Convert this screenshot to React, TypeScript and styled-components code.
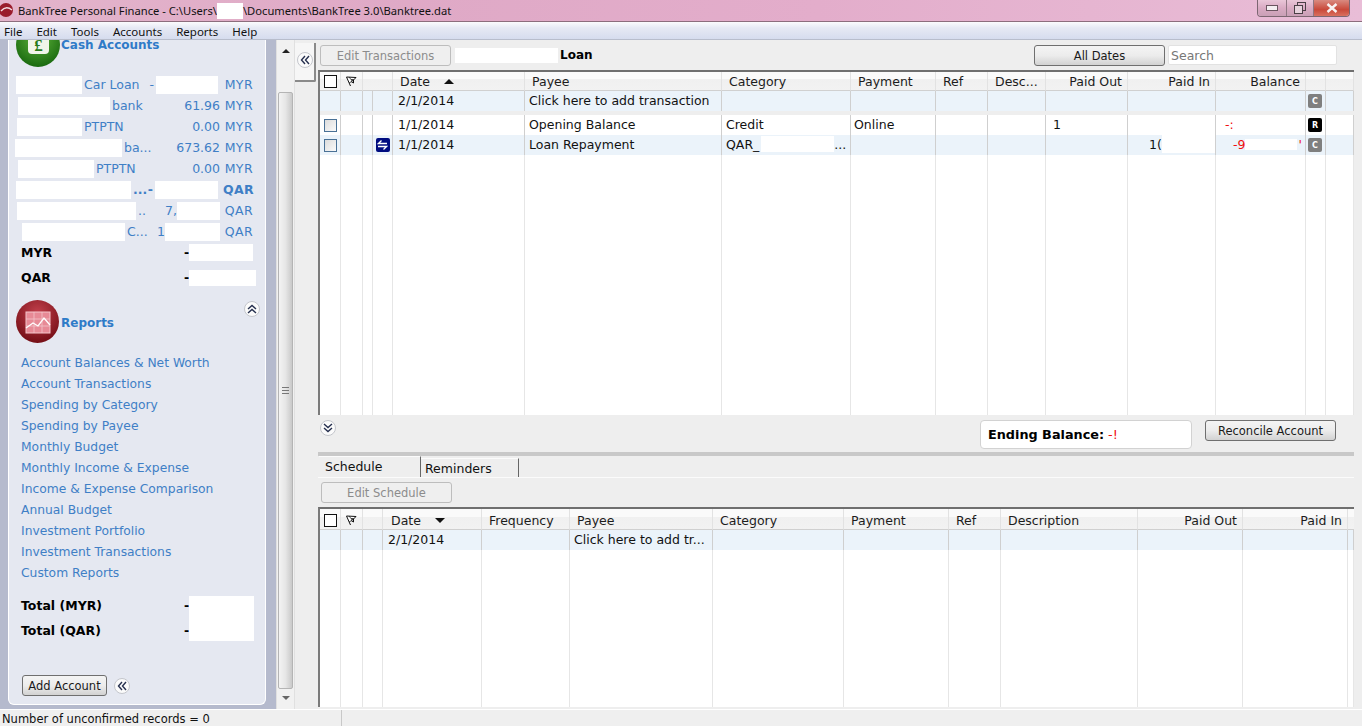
import React, { FC } from 'react';
import styled, { createGlobalStyle } from 'styled-components';

const GlobalStyle = createGlobalStyle`
	html, body {
		margin: 0;
		padding: 0;
		overflow: hidden;
		background: #eeeeee;
	}
	* {
		box-sizing: border-box;
	}
`;

const bodyFont = `'DejaVu Sans', Verdana, sans-serif`;
const chromeFont = `'Noto Sans', 'Open Sans', sans-serif`;

const topColumns = '21px 22px 10px 20px 132px 197px 129px 85px 52px 58px 82px 88px 90px 20px 28px';
const bottomColumns = '21px 22px 20px 99px 88px 143px 131px 105px 52px 137px 105px 105px 6px';

const Window = styled.div`
	width: 1362px;
	height: 726px;
	display: grid;
	grid-template-rows: 22px 18px 669px 17px;
	font-family: ${bodyFont};
	font-size: 12px;
	color: #111;
	overflow: hidden;
`;

const TitleBar = styled.div`
	position: relative;
	display: flex;
	align-items: center;
	padding-left: 18px;
	font-family: ${chromeFont};
	font-size: 11.2px;
	background: linear-gradient(90deg, #e3b4cb 0%, #dfa9c6 30%, #e3adcb 60%, #e9bdd7 100%);
	border-bottom: 1px solid #8c6d7d;
`;

const TitleMask = styled.span`
	display: inline-block;
	width: 26px;
	height: 16px;
	background: #fff;
`;

const AppIcon = styled.svg`
	position: absolute;
	left: 0;
	top: 3px;
`;

const Controls = styled.div`
	position: absolute;
	right: 12px;
	top: 0;
	display: grid;
	grid-template-columns: 28px 27px 36px;
	height: 17px;
	border: 1px solid #7c6672;
	border-top: 0;
	border-radius: 0 0 4px 4px;
	overflow: hidden;
`;

const Control = styled.div<{ $close?: boolean }>`
	display: flex;
	align-items: center;
	justify-content: center;
	border-left: 1px solid #8f7683;
	background: ${(p) =>
		p.$close
			? 'linear-gradient(180deg, #d98a80 0%, #c9493a 60%, #d9705f 100%)'
			: 'linear-gradient(180deg, #e9c6d8 0%, #d9aac3 50%, #c9a0b6 100%)'};
	&:first-child {
		border-left: 0;
	}
`;

const MenuBar = styled.div`
	display: flex;
	align-items: center;
	padding: 2px 0 0 4px;
	gap: 14px;
	font-family: ${chromeFont};
	font-size: 11.5px;
	background: linear-gradient(180deg, #fbfbfd 0%, #e6e9f4 35%, #d6dcee 100%);
	border-bottom: 1px solid #b8bdcc;
`;

const Body = styled.div`
	display: grid;
	grid-template-columns: 276px 19px 23px 1fr;
	min-height: 0;
`;

const SidePanel = styled.div`
	background: #b5bacd;
	padding: 0 10px 4px 8px;
	overflow: hidden;
`;

const SideCard = styled.div`
	height: 100%;
	background: #e5e8f1;
	border: 1px solid #fff;
	border-top: 0;
	border-radius: 0 0 6px 6px;
	padding: 0 12px 0 7px;
	display: flex;
	flex-direction: column;
	position: relative;
`;

const SectionHead = styled.div<{ $clipped?: boolean; $mt?: number }>`
	display: flex;
	align-items: center;
	gap: 2px;
	height: 43px;
	margin-top: ${(p) => (p.$clipped ? '-17px' : `${p.$mt ?? 0}px`)};
	position: relative;
`;

const SectionTitle = styled.div<{ $raised?: boolean }>`
	font-weight: bold;
	font-size: 12px;
	color: #2f7bc8;
	${(p) => (p.$raised ? 'align-self: flex-start; margin: 15px 0 0 -1px;' : 'margin-top: 2px;')}
`;

const AccountList = styled.div`
	display: flex;
	flex-direction: column;
	margin: 8px 0 -2px;
`;

const AccountRow = styled.div<{ $bold?: boolean }>`
	display: flex;
	align-items: center;
	height: 21px;
	color: #3f7fc6;
	font-size: 12.5px;
	white-space: nowrap;
	font-weight: ${(p) => (p.$bold ? 'bold' : 'normal')};
`;

const Mask = styled.span<{ $w: number; $h?: number; $ml?: number; $mr?: number }>`
	display: inline-block;
	flex: none;
	width: ${(p) => p.$w}px;
	height: ${(p) => p.$h ?? 18}px;
	margin-left: ${(p) => p.$ml ?? 0}px;
	margin-right: ${(p) => p.$mr ?? 0}px;
	background: #fff;
`;

const AccountName = styled.span`
	margin-left: 2px;
`;

const Amount = styled.span`
	margin-left: auto;
`;

const Unit = styled.span`
	flex: none;
	width: 30px;
	margin-left: 3px;
	text-align: right;
	letter-spacing: 0.4px;
`;

const TotalRow = styled.div`
	display: flex;
	align-items: center;
	height: 25px;
	padding-left: 5px;
	font-weight: bold;
	font-size: 12.5px;
	color: #000;
`;

const TotalLabel = styled.span`
	width: 163px;
	flex: none;
`;

const TotalDash = styled.span`
	width: 5px;
	flex: none;
`;

const ReportLinks = styled.div`
	display: flex;
	flex-direction: column;
	margin-top: 10px;
	padding-left: 5px;
`;

const ReportLink = styled.div`
	height: 21px;
	line-height: 21px;
	font-size: 12.3px;
	color: #3f7fc6;
	white-space: nowrap;
`;

const TotalsBlock = styled.div`
	position: relative;
	margin-top: 9px;
`;

const TotalsMask = styled.span`
	position: absolute;
	left: 173px;
	top: 3px;
	width: 65px;
	height: 45px;
	background: #fff;
`;

const SideFooter = styled.div`
	display: flex;
	align-items: center;
	gap: 7px;
	margin-top: auto;
	margin-bottom: 8px;
	padding-left: 6px;
`;

const RoundBtn = styled.div`
	width: 16px;
	height: 16px;
	border-radius: 50%;
	background: #fbfbfb;
	border: 1px solid #c4c6cc;
	display: flex;
	align-items: center;
	justify-content: center;
	flex: none;
`;

const ChevronSpot = styled.div`
	position: absolute;
	right: -7px;
	top: 1px;
`;

const Button = styled.div<{ $w: number; $disabled?: boolean }>`
	width: ${(p) => p.$w}px;
	height: 21px;
	flex: none;
	display: flex;
	align-items: center;
	justify-content: center;
	padding-top: 1px;
	font-size: 11.5px;
	border-radius: 3px;
	white-space: nowrap;
	color: ${(p) => (p.$disabled ? '#8c8c8c' : '#1a1a1a')};
	border: 1px solid ${(p) => (p.$disabled ? '#bdbdbd' : '#6f6f6f')};
	background: ${(p) =>
		p.$disabled
			? '#efefef'
			: 'linear-gradient(180deg, #f4f4f4 0%, #ececec 50%, #d2d2d2 100%)'};
`;

const ScrollTrack = styled.div`
	background: #f1f1f1;
	border-left: 1px solid #e0e0e0;
	border-right: 1px solid #e0e0e0;
	display: flex;
	flex-direction: column;
	align-items: center;
	padding: 9px 0 0;
`;

const ScrollArrow = styled.div<{ $down?: boolean }>`
	width: 0;
	height: 0;
	flex: none;
	border-left: 4px solid transparent;
	border-right: 4px solid transparent;
	${(p) => (p.$down ? 'border-top: 4px solid #666;' : 'border-bottom: 4px solid #222;')}
`;

const SortArrow = styled.div<{ $down?: boolean }>`
	width: 0;
	height: 0;
	flex: none;
	border-left: 5px solid transparent;
	border-right: 5px solid transparent;
	${(p) => (p.$down ? 'border-top: 5px solid #111;' : 'border-bottom: 5px solid #111;')}
`;

const ScrollThumb = styled.div`
	width: 15px;
	height: 597px;
	margin: 39px 0 7px;
	background: linear-gradient(90deg, #f3f3f3 0%, #e6e6e6 50%, #c9c9c9 100%);
	border: 1px solid #b4b4b4;
	border-radius: 2px;
	display: flex;
	align-items: center;
	justify-content: center;
`;

const Grip = styled.div`
	width: 7px;
	height: 7px;
	border-top: 1px solid #777;
	border-bottom: 1px solid #777;
	position: relative;
	&:after {
		content: '';
		position: absolute;
		left: 0;
		right: 0;
		top: 2px;
		height: 1px;
		background: #777;
	}
`;

const Gutter = styled.div`
	background: #eeeeee;
	padding-top: 3px;
`;

const GutterTab = styled.div`
	width: 21px;
	height: 39px;
	padding-bottom: 4px;
	background: #f6f6f6;
	border-right: 2px solid #8a8a8a;
	border-bottom: 2px solid #8a8a8a;
	border-radius: 0 0 2px 0;
	display: flex;
	align-items: center;
	justify-content: center;
`;

const Content = styled.div`
	background: #eeeeee;
	display: flex;
	flex-direction: column;
	min-width: 0;
	padding-right: 8px;
`;

const Toolbar = styled.div`
	height: 30px;
	display: flex;
	align-items: center;
	padding: 0 17px 0 2px;
`;

const AccountTitle = styled.div`
	display: flex;
	align-items: center;
	margin-left: 4px;
	font-weight: bold;
	font-size: 12px;
	color: #000;
	gap: 2px;
	flex: 1;
`;

const SearchBox = styled.div`
	width: 169px;
	height: 20px;
	margin-left: 3px;
	background: #fff;
	border: 1px solid #e2e2e2;
	border-radius: 2px;
	color: #777;
	font-size: 12.5px;
	padding-left: 2px;
	line-height: 19px;
`;

const Grid = styled.div<{ $h: number }>`
	height: ${(p) => p.$h}px;
	flex: none;
	background: #fff;
	border-top: 2px solid #6f6f6f;
	border-left: 2px solid #7a7a7a;
	overflow: hidden;
	display: flex;
	flex-direction: column;
`;

const Row = styled.div<{ $cols: string; $h: number; $bg?: string; $fill?: boolean }>`
	display: grid;
	grid-template-columns: ${(p) => p.$cols};
	height: ${(p) => p.$h}px;
	background: ${(p) => p.$bg ?? '#fff'};
	flex: ${(p) => (p.$fill ? '1' : 'none')};
`;

const HeadCell = styled.div<{ $right?: boolean; $center?: boolean; $pl?: number }>`
	display: flex;
	align-items: center;
	justify-content: ${(p) => (p.$right ? 'flex-end' : p.$center ? 'center' : 'flex-start')};
	padding: ${(p) => (p.$center ? '0' : `0 5px 0 ${p.$pl ?? 7}px`)};
	gap: 14px;
	font-size: 12.5px;
	white-space: nowrap;
	overflow: hidden;
	color: #1c1c1c;
	border-right: 1px solid #e2e2e2;
	border-bottom: 1px solid #d0d0d0;
	background: linear-gradient(180deg, #fafafa 0%, #fafafa 40%, #f0f0f0 41%, #f2f2f2 100%);
`;

const LowHeadCell = styled(HeadCell)`
	padding-top: 2px;
`;

const Cell = styled.div<{ $center?: boolean; $color?: string; $line?: string; $pl?: number; $text?: boolean }>`
	display: flex;
	align-items: center;
	justify-content: ${(p) => (p.$center ? 'center' : 'flex-start')};
	padding-left: ${(p) => (p.$center ? 0 : p.$pl ?? 4)}px;
	padding-bottom: ${(p) => (p.$center || p.$pl === 2 ? 0 : 2)}px;
	font-size: 12.5px;
	white-space: nowrap;
	overflow: hidden;
	color: ${(p) => p.$color ?? '#111'};
	border-right: 1px solid ${(p) => p.$line ?? '#cfcfcf'};
`;

const Gap = styled.div`
	height: 4px;
	flex: none;
	background: #eeeeee;
`;

const Check = styled.div<{ $head?: boolean }>`
	width: 13px;
	height: 13px;
	border: 1px solid ${(p) => (p.$head ? '#111' : '#4a7196')};
	background: ${(p) => (p.$head ? '#fff' : 'linear-gradient(135deg, #dcdcdc 0%, #fafafa 100%)')};
	flex: none;
`;

const Badge = styled.div<{ $dark?: boolean }>`
	width: 14px;
	height: 14px;
	border-radius: 2px;
	background: ${(p) => (p.$dark ? '#000' : '#7f7f7f')};
	color: #fff;
	font-size: 8px;
	font-weight: bold;
	display: flex;
	align-items: center;
	justify-content: center;
`;

const TransferIcon = styled.div`
	width: 14px;
	height: 14px;
	background: #000c80;
	border-radius: 2px;
	display: flex;
	align-items: center;
	justify-content: center;
`;

const BalanceBar = styled.div`
	height: 37px;
	display: flex;
	align-items: flex-start;
	padding: 5px 18px 0 2px;
	position: relative;
`;

const BalanceBox = styled.div`
	width: 212px;
	height: 29px;
	margin-left: auto;
	background: #fff;
	border: 1px solid #d2d2d2;
	border-radius: 4px;
	display: flex;
	align-items: center;
	padding-left: 7px;
	font-weight: bold;
	font-size: 12.8px;
	color: #000;
	gap: 4px;
`;

const Negative = styled.span`
	color: #f01010;
	font-weight: normal;
`;

const BarSpacer = styled.div`
	width: 13px;
	flex: none;
`;

const Divider = styled.div`
	height: 4px;
	flex: none;
	background: #c8c8c8;
`;

const TabStrip = styled.div`
	height: 22px;
	display: flex;
	align-items: flex-end;
	border-bottom: 1px solid #fbfbfb;
	padding-left: 1px;
`;

const Tab = styled.div<{ $active?: boolean }>`
	width: ${(p) => (p.$active ? '102px' : '98px')};
	height: ${(p) => (p.$active ? '21px' : '19px')};
	padding: ${(p) => (p.$active ? '0 6px 2px' : '0 4px')};
	display: flex;
	align-items: center;
	font-size: 12.5px;
	background: #eeeeee;
	border-top: 1px solid #fbfbfb;
	border-right: 1px solid #666;
`;

const ScheduleBar = styled.div`
	height: 29px;
	flex: none;
	display: flex;
	align-items: center;
	padding-left: 3px;
`;

const StatusBar = styled.div`
	display: grid;
	grid-template-columns: 342px 1fr;
	font-family: ${bodyFont};
	font-size: 11.5px;
	background: #efefef;
	border-top: 1px solid #fff;
`;

const StatusPane = styled.div`
	padding-left: 2px;
	border-right: 1px solid #c8c8c8;
	line-height: 19px;
	overflow: hidden;
	white-space: nowrap;
`;

const Chevrons: FC<{ dir: 'left' | 'up' | 'down' }> = ({ dir }) => {
	const rotate = dir === 'left' ? 0 : dir === 'up' ? 90 : 270;
	return (
		<svg width='10' height='10' viewBox='0 0 10 10' style={{ transform: `rotate(${rotate}deg)` }}>
			<path d='M5 1 L1.5 5 L5 9 M9 1 L5.5 5 L9 9' fill='none' stroke='#26304f' strokeWidth='1.4' />
		</svg>
	);
};

const FlagIcon: FC = () => (
	<svg width='11' height='11' viewBox='0 0 11 11'>
		<path d='M0.5 1 L10 1.5 L7.5 4 L7.5 7 L5 5.5 L3.5 7' fill='#fff' stroke='#111' strokeWidth='1' />
		<path d='M0.5 1 L4.5 10' fill='none' stroke='#111' strokeWidth='1' />
		<path d='M3 1 L5 3.5 H7.5 L6 5.5' fill='#333' stroke='#111' strokeWidth='0.6' />
	</svg>
);

const CashIcon: FC = () => (
	<svg width='44' height='44' viewBox='0 0 44 44'>
		<defs>
			<radialGradient id='cash' cx='50%' cy='35%' r='70%'>
				<stop offset='0%' stopColor='#5fb43c' />
				<stop offset='100%' stopColor='#14640c' />
			</radialGradient>
		</defs>
		<circle cx='22' cy='22' r='22' fill='url(#cash)' />
		<path d='M15 6 H30 L33 14 V27 Q33 31 29 31 H16 Q12 31 12 27 V14 Z' fill='#f1f5ea' />
		<text x='22.5' y='28' fontSize='17' fontWeight='bold' textAnchor='middle' fill='#2a7a1c' fontFamily='Liberation Serif, serif'>
			£
		</text>
	</svg>
);

const ReportIcon: FC = () => (
	<svg width='43' height='43' viewBox='0 0 43 43'>
		<defs>
			<radialGradient id='rep' cx='50%' cy='30%' r='75%'>
				<stop offset='0%' stopColor='#c2404c' />
				<stop offset='100%' stopColor='#6f0a12' />
			</radialGradient>
		</defs>
		<circle cx='21.5' cy='21.5' r='21.5' fill='url(#rep)' />
		<rect x='10' y='12' width='24' height='21' fill='#e78a96' stroke='#f4c4ca' />
		<path d='M18 12 V33 M26 12 V33 M10 19 H34 M10 26 H34' stroke='#f4c4ca' strokeWidth='0.8' />
		<path d='M10 28 L17 23 L22 26 L28 18 L34 25' fill='none' stroke='#fff' strokeWidth='1.3' />
	</svg>
);

const SwapIcon: FC = () => (
	<svg width='11' height='10' viewBox='0 0 11 10'>
		<path d='M10 3.5 H1.5 L4.5 0.5 M1 6.5 H9.5 L6.5 9.5' fill='none' stroke='#fff' strokeWidth='1.3' />
	</svg>
);

const accounts = [
	{ mask: 66, ml: 0, name: 'Car Loan', dash: '-', mask2: 62, amount: '', unit: 'MYR' },
	{ mask: 92, ml: 2, name: 'bank', amount: '61.96', unit: 'MYR' },
	{ mask: 65, ml: 1, name: 'PTPTN', amount: '0.00', unit: 'MYR' },
	{ mask: 107, ml: -1, name: 'ba...', amount: '673.62', unit: 'MYR' },
	{ mask: 76, ml: 2, name: 'PTPTN', amount: '0.00', unit: 'MYR' },
	{ mask: 115, ml: 0, name: '...', bold: true, dash: '-', mask2: 63, amount: '', unit: 'QAR' },
	{ mask: 119, ml: 1, name: '..', amount: '7,', mask3: 43, unit: 'QAR' },
	{ mask: 103, ml: 6, name: 'C...', amount: '1', mask3: 55, unit: 'QAR' },
];

const reports = [
	'Account Balances & Net Worth',
	'Account Transactions',
	'Spending by Category',
	'Spending by Payee',
	'Monthly Budget',
	'Monthly Income & Expense',
	'Income & Expense Comparison',
	'Annual Budget',
	'Investment Portfolio',
	'Investment Transactions',
	'Custom Reports',
];

const topHeads = ['Date', 'Payee', 'Category', 'Payment', 'Ref', 'Desc...'];

const App: FC = () => {
	return (
		<>
			<GlobalStyle />
			<Window>
				<TitleBar>
					<AppIcon width='14' height='14' viewBox='0 0 14 14'>
						<circle cx='6' cy='7' r='7' fill='#9a1c2c' />
						<path d='M1 8 Q6 2 12 7' fill='none' stroke='#f2dbe0' strokeWidth='1.4' />
					</AppIcon>
					BankTree Personal Finance - C:\Users\<TitleMask />\Documents\BankTree 3.0\Banktree.dat
					<Controls>
						<Control>
							<svg width='12' height='6' viewBox='0 0 12 6'>
								<rect x='0.5' y='0.5' width='11' height='5' fill='#f4eef1' stroke='#6a5560' />
							</svg>
						</Control>
						<Control>
							<svg width='12' height='12' viewBox='0 0 12 12'>
								<rect x='3.5' y='0.5' width='8' height='8' fill='none' stroke='#4a3f46' />
								<rect x='0.5' y='3.5' width='8' height='8' fill='#e6d2dc' stroke='#4a3f46' />
							</svg>
						</Control>
						<Control $close>
							<svg width='12' height='10' viewBox='0 0 12 10'>
								<path d='M1.5 1 L10.5 9 M10.5 1 L1.5 9' stroke='#f8f3f3' strokeWidth='2.4' />
							</svg>
						</Control>
					</Controls>
				</TitleBar>
				<MenuBar>
					<span>File</span>
					<span>Edit</span>
					<span>Tools</span>
					<span>Accounts</span>
					<span>Reports</span>
					<span>Help</span>
				</MenuBar>
				<Body>
					<SidePanel>
						<SideCard>
							<SectionHead $clipped>
								<CashIcon />
								<SectionTitle $raised>Cash Accounts</SectionTitle>
							</SectionHead>
							<AccountList>
								{accounts.map((a, i) => (
									<AccountRow key={i} $bold={a.bold}>
										<Mask $w={a.mask} $ml={a.ml} />
										<AccountName>{a.name}</AccountName>
										{a.dash ? <Amount>{a.dash}</Amount> : <Amount>{a.amount}</Amount>}
										{a.mask2 ? <Mask $w={a.mask2} $ml={2} $mr={2} /> : null}
										{a.mask3 ? <Mask $w={a.mask3} /> : null}
										<Unit>{a.unit}</Unit>
									</AccountRow>
								))}
							</AccountList>
							<TotalRow>
								<TotalLabel>MYR</TotalLabel>
								<TotalDash>-</TotalDash>
								<Mask $w={64} $h={17} />
							</TotalRow>
							<TotalRow>
								<TotalLabel>QAR</TotalLabel>
								<TotalDash>-</TotalDash>
								<Mask $w={67} $h={16} />
							</TotalRow>
							<SectionHead $mt={10}>
								<ReportIcon />
								<SectionTitle>Reports</SectionTitle>
								<ChevronSpot>
									<RoundBtn>
										<Chevrons dir='up' />
									</RoundBtn>
								</ChevronSpot>
							</SectionHead>
							<ReportLinks>
								{reports.map((r) => (
									<ReportLink key={r}>{r}</ReportLink>
								))}
							</ReportLinks>
							<TotalsBlock>
								<TotalsMask />
								<TotalRow>
									<TotalLabel>Total (MYR)</TotalLabel>
									<TotalDash>-</TotalDash>
								</TotalRow>
								<TotalRow>
									<TotalLabel>Total (QAR)</TotalLabel>
									<TotalDash>-</TotalDash>
								</TotalRow>
							</TotalsBlock>
							<SideFooter>
								<Button $w={85}>Add Account</Button>
								<RoundBtn>
									<Chevrons dir='left' />
								</RoundBtn>
							</SideFooter>
						</SideCard>
					</SidePanel>
					<ScrollTrack>
						<ScrollArrow />
						<ScrollThumb>
							<Grip />
						</ScrollThumb>
						<ScrollArrow $down />
					</ScrollTrack>
					<Gutter>
						<GutterTab>
							<RoundBtn>
								<Chevrons dir='left' />
							</RoundBtn>
						</GutterTab>
					</Gutter>
					<Content>
						<Toolbar>
							<Button $w={131} $disabled>
								Edit Transactions
							</Button>
							<AccountTitle>
								<Mask $w={103} $h={15} />
								Loan
							</AccountTitle>
							<Button $w={131}>All Dates</Button>
							<SearchBox>Search</SearchBox>
						</Toolbar>
						<Grid $h={345}>
							<Row $cols={topColumns} $h={19}>
								<HeadCell $center>
									<Check $head />
								</HeadCell>
								<HeadCell $center>
									<FlagIcon />
								</HeadCell>
								<HeadCell />
								<HeadCell />
								{topHeads.map((h) => (
									<HeadCell key={h}>
										{h}
										{h === 'Date' ? <SortArrow /> : null}
									</HeadCell>
								))}
								<HeadCell $right>Paid Out</HeadCell>
								<HeadCell $right>Paid In</HeadCell>
								<HeadCell $right>Balance</HeadCell>
								<HeadCell />
								<HeadCell />
							</Row>
							<Row $cols={topColumns} $h={20} $bg='#ebf3fa'>
								<Cell />
								<Cell />
								<Cell />
								<Cell />
								<Cell $pl={5}>2/1/2014</Cell>
								<Cell>Click here to add transaction</Cell>
								<Cell />
								<Cell />
								<Cell />
								<Cell />
								<Cell />
								<Cell />
								<Cell />
								<Cell $pl={2}>
									<Badge>C</Badge>
								</Cell>
								<Cell />
							</Row>
							<Gap />
							<Row $cols={topColumns} $h={20}>
								<Cell $center>
									<Check />
								</Cell>
								<Cell />
								<Cell />
								<Cell />
								<Cell $pl={5}>1/1/2014</Cell>
								<Cell>Opening Balance</Cell>
								<Cell>Credit</Cell>
								<Cell $pl={3}>Online</Cell>
								<Cell />
								<Cell />
								<Cell $pl={7}>1</Cell>
								<Cell />
								<Cell $color='#f01010' $pl={9}>
									-:
								</Cell>
								<Cell $pl={2}>
									<Badge $dark>R</Badge>
								</Cell>
								<Cell />
							</Row>
							<Row $cols={topColumns} $h={20} $bg='#ebf3fa'>
								<Cell $center>
									<Check />
								</Cell>
								<Cell />
								<Cell />
								<Cell $center>
									<TransferIcon>
										<SwapIcon />
									</TransferIcon>
								</Cell>
								<Cell $pl={5}>1/1/2014</Cell>
								<Cell>Loan Repayment</Cell>
								<Cell>
									QAR_
									<Mask $w={73} $h={16} $ml={2} />
									...
								</Cell>
								<Cell />
								<Cell />
								<Cell />
								<Cell />
								<Cell $pl={21}>
									1(
									<Mask $w={53} />
								</Cell>
								<Cell $color='#f01010' $pl={17}>
									-9
									<Mask $w={52} $h={11} $mr={1} />'
								</Cell>
								<Cell $pl={2}>
									<Badge>C</Badge>
								</Cell>
								<Cell />
							</Row>
							<Row $cols={topColumns} $h={0} $fill>
								{Array.from({ length: 15 }, (_, i) => (
									<Cell key={i} $line='#e6e6e6' />
								))}
							</Row>
						</Grid>
						<BalanceBar>
							<RoundBtn>
								<Chevrons dir='down' />
							</RoundBtn>
							<BalanceBox>
								Ending Balance: <Negative>-!</Negative>
							</BalanceBox>
							<BarSpacer />
							<Button $w={131}>Reconcile Account</Button>
						</BalanceBar>
						<Divider />
						<TabStrip>
							<Tab $active>Schedule</Tab>
							<Tab>Reminders</Tab>
						</TabStrip>
						<ScheduleBar>
							<Button $w={131} $disabled>
								Edit Schedule
							</Button>
						</ScheduleBar>
						<Grid $h={200}>
							<Row $cols={bottomColumns} $h={21}>
								<LowHeadCell $center>
									<Check $head />
								</LowHeadCell>
								<LowHeadCell $center>
									<FlagIcon />
								</LowHeadCell>
								<LowHeadCell />
								<LowHeadCell $pl={8}>
									Date
									<SortArrow $down />
								</LowHeadCell>
								<LowHeadCell>Frequency</LowHeadCell>
								<LowHeadCell>Payee</LowHeadCell>
								<LowHeadCell>Category</LowHeadCell>
								<LowHeadCell>Payment</LowHeadCell>
								<LowHeadCell>Ref</LowHeadCell>
								<LowHeadCell>Description</LowHeadCell>
								<LowHeadCell $right>Paid Out</LowHeadCell>
								<LowHeadCell $right>Paid In</LowHeadCell>
								<LowHeadCell />
							</Row>
							<Row $cols={bottomColumns} $h={20} $bg='#ebf3fa'>
								<Cell />
								<Cell />
								<Cell />
								<Cell $pl={5}>2/1/2014</Cell>
								<Cell />
								<Cell>Click here to add tr...</Cell>
								<Cell />
								<Cell />
								<Cell />
								<Cell />
								<Cell />
								<Cell />
								<Cell />
							</Row>
							<Row $cols={bottomColumns} $h={0} $fill>
								{Array.from({ length: 13 }, (_, i) => (
									<Cell key={i} $line='#e6e6e6' />
								))}
							</Row>
						</Grid>
					</Content>
				</Body>
				<StatusBar>
					<StatusPane>Number of unconfirmed records = 0</StatusPane>
					<div />
				</StatusBar>
			</Window>
		</>
	);
};

export default App;
